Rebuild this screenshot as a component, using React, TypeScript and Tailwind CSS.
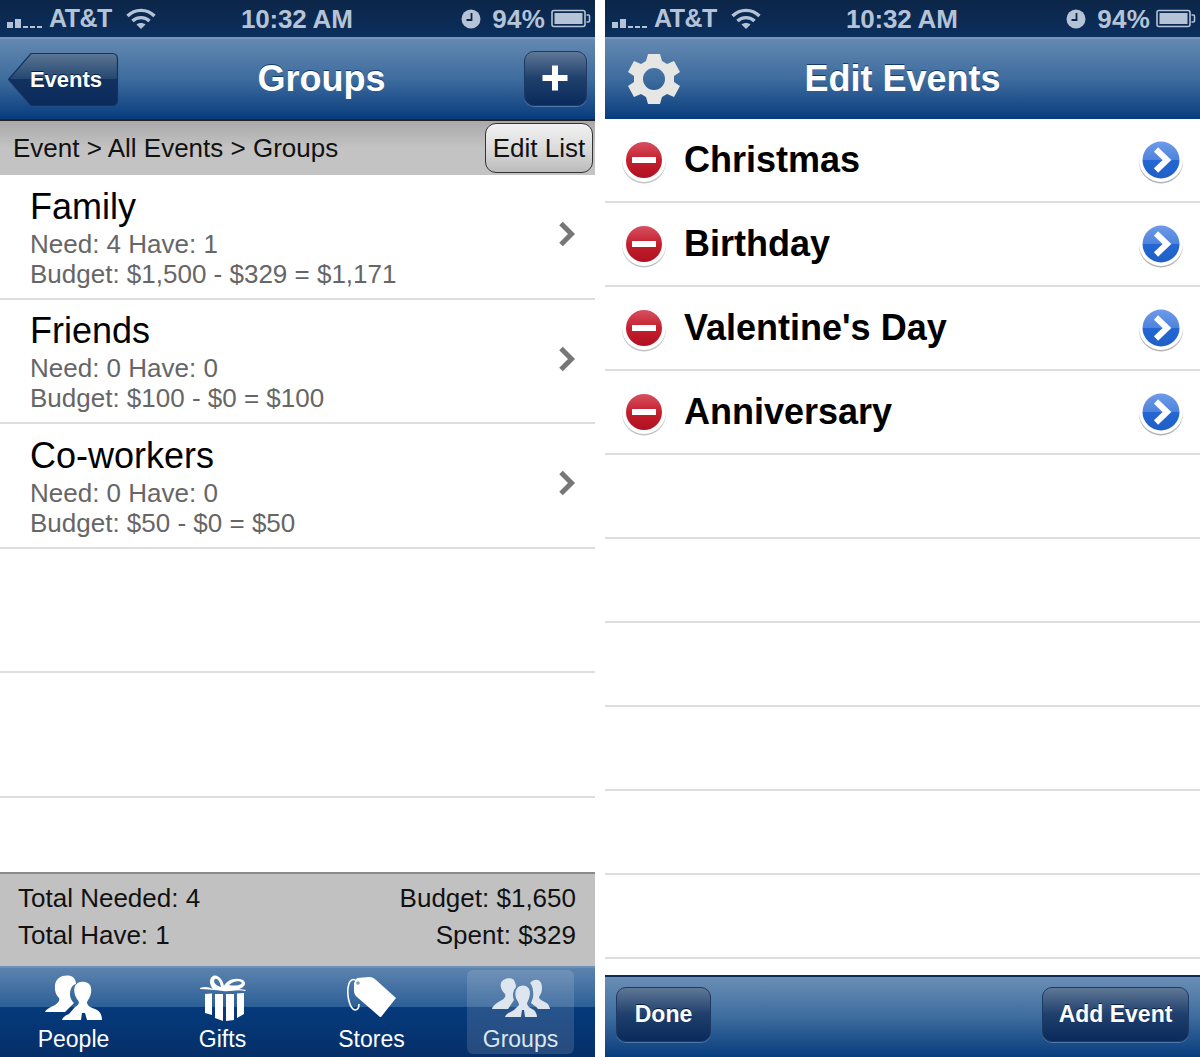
import React from "react";

const FONT = "font-['Liberation_Sans',Arial,sans-serif]";

function StatusBar() {
  return (
    <div className="flex h-[37px] items-center bg-gradient-to-b from-[#0b2547] to-[#0b2f5f] pl-[7px] pr-[4px] text-[26px] font-bold leading-none text-[#b5c3d6]">
      <div className="flex w-[234px] items-center">
        <svg width="38" height="14" viewBox="0 0 38 14" className="mt-[6px]" fill="#b5c3d6">
          <rect x="0" y="7" width="6" height="6" />
          <rect x="8" y="4" width="6" height="9" />
          <rect x="16" y="11" width="5" height="2" />
          <rect x="23" y="11" width="5" height="2" />
          <rect x="30" y="11" width="5" height="2" />
        </svg>
        <span className="ml-[4px] text-[25px] tracking-[-0.5px]">AT&amp;T</span>
        <svg width="30" height="22" viewBox="0 0 30 22" className="ml-[14px]" fill="none" stroke="#b5c3d6" strokeWidth="3.4">
          <path d="M1.5 8 C9 0.5 21 0.5 28.5 8" />
          <path d="M6.5 13 C11 8.5 19 8.5 23.5 13" />
          <path d="M15 21 L10.5 16.6 C13 14.6 17 14.6 19.5 16.6 Z" fill="#b5c3d6" stroke="none" />
        </svg>
      </div>
      <span className="tracking-[-0.2px]">10:32 AM</span>
      <div className="ml-auto flex items-center">
        <svg width="20" height="20" viewBox="0 0 20 20">
          <circle cx="10" cy="10" r="9.5" fill="#b5c3d6" />
          <path d="M10.5 4 V11 H5.5" fill="none" stroke="#0b2547" strokeWidth="1.8" />
        </svg>
        <span className="ml-[11px] tracking-[0.2px]">94%</span>
        <svg width="40" height="20" viewBox="0 0 40 20" className="ml-[6px]">
          <rect x="1" y="1.5" width="33" height="16" rx="2" fill="none" stroke="#b5c3d6" strokeWidth="1.6" />
          <rect x="3.5" y="4" width="28" height="11" fill="#b5c3d6" />
          <path d="M35.5 6 H37.5 Q38.5 6 38.5 7 V12 Q38.5 13 37.5 13 H35.5" fill="none" stroke="#b5c3d6" strokeWidth="1.5" />
        </svg>
      </div>
    </div>
  );
}

function BackButton() {
  return (
    <div className="relative flex h-[55px] w-[111px] items-center justify-center pl-[5px] text-[22px] font-bold text-white [text-shadow:0_-1px_0_#0a1f3f]">
      <svg width="111" height="55" viewBox="0 0 111 55" className="absolute left-0 top-0">
        <defs>
          <linearGradient id="backg" x1="0" y1="0" x2="0" y2="1">
            <stop offset="0" stopColor="#5c7695" />
            <stop offset="0.5" stopColor="#23466f" />
            <stop offset="0.5" stopColor="#11315f" />
            <stop offset="1" stopColor="#0b2a5c" />
          </linearGradient>
        </defs>
        <path d="M0.5 27.5 L23 1.5 H104 Q109.5 1.5 109.5 7 V48 Q109.5 53.5 104 53.5 H23 Z" fill="url(#backg)" stroke="#15335c" strokeWidth="1.2" />
      </svg>
      <span className="relative">Events</span>
    </div>
  );
}

function NavBar({ children }: { children: React.ReactNode }) {
  return (
    <div className="relative flex h-[82px] items-center justify-between border-t-2 border-[#7795bb] bg-gradient-to-b from-[#6489b1] via-[#3d6c9e] to-[#063c7d]">
      {children}
    </div>
  );
}

function DarkButton({ className, children }: { className: string; children: React.ReactNode }) {
  return (
    <div
      className={`flex h-[55px] items-center justify-center rounded-[10px] border border-[#1d3a63] bg-gradient-to-b from-[#5f7896] via-[#1f3f6c] to-[#0a2a5c] font-bold text-white shadow-[0_1px_0_#4f78a8] [text-shadow:0_-1px_0_#0a1f3f] ${className}`}
    >
      {children}
    </div>
  );
}

function GroupRow({ name, need, budget }: { name: string; need: string; budget: string }) {
  return (
    <div className="flex h-[124.6px] items-center justify-between border-b-2 border-[#dedede] pl-[30px] pr-[19px]">
      <div>
        <div className="mt-[1px] text-[36px] leading-[44px] text-black">{name}</div>
        <div className="text-[26px] leading-[30px] text-[#666]">{need}</div>
        <div className="text-[26px] leading-[30px] text-[#666]">{budget}</div>
      </div>
      <svg width="18" height="26" viewBox="0 0 18 26" className="mb-[4px]" fill="none" stroke="#777" strokeWidth="5">
        <path d="M3 2.5 L13.5 13 L3 23.5" />
      </svg>
    </div>
  );
}

function Row124() {
  return <div className="h-[124.6px] border-b-2 border-[#dedede]" />;
}

function PeopleIcon() {
  return (
    <svg width="58" height="46" viewBox="0 0 58 46" fill="#fff">
      <path d="M10 30 C14 27 15 25 14 23 C11 20 9.5 16 10 10 C11 3 17 0 23 0.5 C29 1 31 5 31 9 C27 10 25 14 25 19 C25 24 28 27 29 28 L20 37 L0 37 C1 34 6 32 10 30 Z" />
      <path d="M24 39 L30 32 C33 30 34.5 29 33.5 26 C30 22 28 16 30 11 C32 7 36 6 40 7 C45 8 47 12 46 18 C45 23 43 25 42 27 C42 30 44 32 50 34 C55 36 57 40 57 45 L42 45 L40 38 L37 38 L36 45 L17 45 C18 42 21 40 24 39 Z" />
    </svg>
  );
}

function GiftIcon() {
  return (
    <svg width="48" height="48" viewBox="0 0 48 48" fill="#fff">
      <path d="M1 14 C6 12 10 13 14 15 C10 11 10 4 14 2 C19 0 24 6 25 12 C28 6 36 3 44 6 C48 9 46 13 40 15 L47 16 L46 17 C38 15 32 18 24 17 C17 16 8 15 1 15 Z M16 5 C14 7 15 11 22 13 C21 8 19 4 16 5 Z M30 11 C34 12 41 12 43 9 C41 6 34 7 30 11 Z" fill-rule="evenodd" />
      <path d="M6 20 L13 19.5 L13 41 L6 39 Z" />
      <path d="M16 20 L24 20 L24 47 L16 44 Z" />
      <path d="M27 20 L35 20 L35 46 L27 47 Z" />
      <path d="M38 19.5 L45 19 L45 40 L38 44 Z" />
    </svg>
  );
}

function TagIcon() {
  return (
    <svg width="50" height="42" viewBox="0 0 50 42" fill="none">
      <path d="M11 5 C6 0 2 3 1 11 C0 20 3 32 8 33 C11 33 12 30 12 27" stroke="#fff" strokeWidth="1.6" />
      <path d="M10 1 L22 0 C25 0 27 1 29 3 L49 21 L34 40 L33 40 L10 20 C7 17 7 15 7 12 L7 6 Z" fill="#fff" />
      <circle cx="11" cy="6" r="1.8" fill="#7f9dbd" />
    </svg>
  );
}

function GroupsIcon() {
  return (
    <svg width="58" height="40" viewBox="0 0 58 40" fill="#dde5ee">
      <path d="M10 22 C13 20 14 18 13 16 C9 12 8 8 9 5 C11 0 19 -1 22 2 C23 5 24 6 24 9 C21 12 20 18 22 22 L16 31 L0 31 C1 27 6 24 10 22 Z" />
      <path d="M22 32 L27 27 C27 25 26 24 25 22 C22 17 23 10 28 8 C33 6 38 9 38 15 C38 19 36 23 35 25 C35 28 38 30 42 32 C44 34 45 37 45 39 L33 39 L32 32 L30 32 L29 39 L13 39 C14 36 18 34 22 32 Z" />
      <path d="M40 3 C46 0 50 3 50 10 C50 15 48 17 47 19 C47 22 52 23 56 26 C57 28 58 30 58 31 L46 31 C44 28 41 27 39 25 C40 22 42 19 41 13 C41 9 39 6 38 5 Z" />
    </svg>
  );
}

function Tab({ icon, label, active, height }: { icon: React.ReactNode; label: string; active?: boolean; height: string }) {
  return (
    <div
      className={`flex flex-col items-center rounded-[6px] ${active ? "bg-[#ffffff22] text-[#dde5ee]" : "text-white"} w-[107px]`}
    >
      <div className={`flex items-center justify-center ${height}`}>{icon}</div>
      <span className="text-[23px] leading-[26px]">{label}</span>
    </div>
  );
}

function LeftPanel() {
  return (
    <div className="flex h-[1057px] w-[595px] flex-col">
      <StatusBar />
      <NavBar>
        <div className="ml-[8px]">
          <BackButton />
        </div>
        <span className="text-[36px] font-bold text-white [text-shadow:0_-1px_0_#123a6c]">Groups</span>
        <DarkButton className="mb-[2px] mr-[8px] w-[63px]">
          <svg width="26" height="26" viewBox="0 0 26 26" fill="#fff">
            <path d="M10 0.5 H16 V10 H25.5 V16 H16 V25.5 H10 V16 H0.5 V10 H10 Z" />
          </svg>
        </DarkButton>
      </NavBar>
      <div className="flex h-[56px] items-center justify-between border-t-2 border-[#222] bg-gradient-to-b from-[#a9a9a9] via-[#c3c3c3] to-[#c3c3c3] pl-[13px] pr-[2px]">
        <span className="text-[26px] text-[#111]">Event &gt; All Events &gt; Groups</span>
        <div className="flex h-[50px] w-[108px] items-center justify-center rounded-[11px] border border-[#333] bg-gradient-to-b from-[#f2f2f2] via-[#dcdcdc] to-[#bbb] text-[26px] text-[#111]">
          Edit List
        </div>
      </div>
      <div className="flex-1 overflow-hidden bg-white">
        <GroupRow name="Family" need="Need: 4 Have: 1" budget="Budget: $1,500 - $329 = $1,171" />
        <GroupRow name="Friends" need="Need: 0 Have: 0" budget="Budget: $100 - $0 = $100" />
        <GroupRow name="Co-workers" need="Need: 0 Have: 0" budget="Budget: $50 - $0 = $50" />
        <Row124 />
        <Row124 />
      </div>
      <div className="flex h-[94px] justify-between border-t-2 border-[#8a8a8a] bg-[#c1c1c1] pb-[2px] pl-[18px] pr-[19px] pt-[6px] text-[26px] leading-[37px] text-[#111]">
        <div>
          <div>Total Needed: 4</div>
          <div>Total Have: 1</div>
        </div>
        <div className="text-right">
          <div>Budget: $1,650</div>
          <div>Spent: $329</div>
        </div>
      </div>
      <div className="flex h-[91px] justify-between border-t-2 border-[#6f91b8] bg-[linear-gradient(#5c83ae_0%,#2c5f97_44%,#063a7c_44%,#052f68_100%)] pb-[3px] pl-[20px] pr-[21px] pt-[2px]">
        <Tab icon={<PeopleIcon />} label="People" height="h-[56px]" />
        <Tab icon={<GiftIcon />} label="Gifts" height="h-[56px]" />
        <Tab icon={<TagIcon />} label="Stores" height="h-[56px]" />
        <Tab icon={<GroupsIcon />} label="Groups" active height="h-[56px]" />
      </div>
    </div>
  );
}

function Gear() {
  return (
    <svg width="52" height="50" viewBox="0 0 52 50">
      <path
        fillRule="evenodd"
        fill="#e6e6e4"
        d="M20 0 H32 L34 7 L39 10 L46 7 L52 18 L46 22 V28 L52 32 L46 43 L39 40 L34 43 L32 50 H20 L18 43 L13 40 L6 43 L0 32 L6 28 V22 L0 18 L6 7 L13 10 L18 7 Z M26 14 A11 11 0 1 0 26 36 A11 11 0 1 0 26 14 Z"
      />
    </svg>
  );
}

function Minus() {
  return (
    <svg width="50" height="50" viewBox="0 0 50 50">
      <defs>
        <linearGradient id="redg" x1="0" y1="0" x2="0" y2="1">
          <stop offset="0" stopColor="#d75060" />
          <stop offset="0.5" stopColor="#c4202f" />
          <stop offset="1" stopColor="#b01020" />
        </linearGradient>
      </defs>
      <circle cx="25" cy="26.5" r="22" fill="#888" opacity="0.5" />
      <circle cx="25" cy="25" r="22" fill="#fff" />
      <circle cx="25" cy="25" r="18" fill="url(#redg)" />
      <rect x="13" y="22" width="24" height="6" fill="#fff" />
    </svg>
  );
}

function Disclosure() {
  return (
    <svg width="48" height="50" viewBox="0 0 48 50">
      <defs>
        <linearGradient id="blueg" x1="0" y1="0" x2="0" y2="1">
          <stop offset="0" stopColor="#6e9be8" />
          <stop offset="0.5" stopColor="#4f83dc" />
          <stop offset="0.5" stopColor="#2467d4" />
          <stop offset="1" stopColor="#1f5fc6" />
        </linearGradient>
      </defs>
      <circle cx="24" cy="26.5" r="22" fill="#777" opacity="0.55" />
      <circle cx="24" cy="25" r="22" fill="#fff" />
      <circle cx="24" cy="25" r="18.5" fill="url(#blueg)" />
      <path d="M19 14.5 L30 25 L19 35.5" fill="none" stroke="#fff" strokeWidth="6" />
    </svg>
  );
}

function EventRow({ name }: { name?: string }) {
  return (
    <div className="flex h-[84px] items-center border-b-2 border-[#dedede] pl-[14px] pr-[15px]">
      {name && (
        <>
          <Minus />
          <span className="ml-[15px] text-[36px] font-bold text-black">{name}</span>
          <div className="ml-auto">
            <Disclosure />
          </div>
        </>
      )}
    </div>
  );
}

function RightPanel() {
  return (
    <div className="flex h-[1057px] w-[595px] flex-col">
      <StatusBar />
      <NavBar>
        <div className="ml-[23px]">
          <Gear />
        </div>
        <span className="absolute inset-x-0 text-center text-[36px] font-bold text-white [text-shadow:0_-1px_0_#123a6c]">
          Edit Events
        </span>
      </NavBar>
      <div className="flex-1 overflow-hidden bg-white">
        {["Christmas", "Birthday", "Valentine's Day", "Anniversary", "", "", "", "", "", ""].map((n, i) => (
          <EventRow key={i} name={n} />
        ))}
      </div>
      <div className="flex h-[82px] items-center justify-between border-t-2 border-[#0b2a55] bg-gradient-to-b from-[#6b8fb6] via-[#3d6c9e] to-[#063c7d] px-[11px] pb-[5px]">
        <DarkButton className="w-[95px] text-[23px]">Done</DarkButton>
        <DarkButton className="w-[147px] text-[23px]">Add Event</DarkButton>
      </div>
    </div>
  );
}

export default function App() {
  return (
    <div className={`flex h-[1057px] w-[1200px] justify-between overflow-hidden bg-white ${FONT}`}>
      <LeftPanel />
      <RightPanel />
    </div>
  );
}
